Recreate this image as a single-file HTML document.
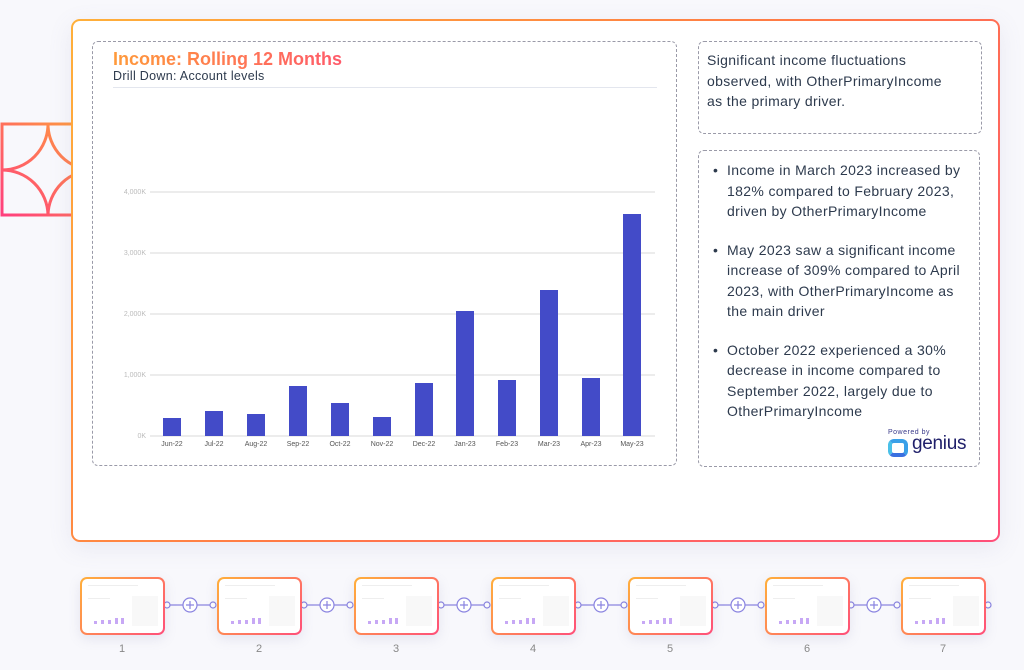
<!DOCTYPE html>
<html><head><meta charset="utf-8"><style>
*{margin:0;padding:0;box-sizing:border-box}
body{width:1024px;height:670px;background:#f8f8fc;position:relative;overflow:hidden;font-family:"Liberation Sans",sans-serif;color:#2b3648}
.card{position:absolute;left:71px;top:19px;width:929px;height:523px;border-radius:9px;padding:2px;background:linear-gradient(135deg,#ffb03a,#ff7a45 50%,#ff4f7a);box-shadow:0 6px 24px rgba(120,120,170,.12)}
.card>div{width:100%;height:100%;background:#fff;border-radius:7px;position:relative}
.dash{position:absolute;border:1.3px dashed #9a9aa8;border-radius:6px}
.t{position:absolute;white-space:nowrap}
.rt{font-size:14px;letter-spacing:.35px;line-height:20.5px;color:#2d3a4d}
ul{list-style:none}
li{position:relative;padding-left:18px;margin-bottom:18px}
li:before{content:"•";position:absolute;left:4px}
.thumb{position:absolute;top:577px;width:85px;height:58px;border-radius:7px;padding:2px;background:linear-gradient(135deg,#ffb03a,#ff4f7a);box-shadow:0 4px 12px rgba(120,120,170,.15)}
.thumb>div{background:#fff;width:100%;height:100%;border-radius:5px;position:relative;overflow:hidden}
.thumb i{position:absolute;display:block;background:#eee}
.thumb b{position:absolute;display:block;background:#c7a8f5;width:3px;bottom:9px}
.num{position:absolute;top:643px;font-size:11px;color:#888;width:20px;text-align:center}
</style></head><body>
<svg style="position:absolute;left:0;top:0" width="100" height="230">
<defs><linearGradient id="g" x1="1" y1="0" x2="0" y2="1"><stop offset="0" stop-color="#ffa23a"/><stop offset="1" stop-color="#ff3f7e"/></linearGradient></defs>
<g fill="none" stroke="url(#g)" stroke-width="3">
<rect x="2" y="124" width="92" height="91"/>
<path d="M48 124 A46 46 0 0 1 2 170 M48 124 A46 46 0 0 0 94 170 M2 170 A46 46 0 0 1 48 215 M94 170 A46 46 0 0 0 48 215"/>
</g></svg>
<div class="card"><div>
<div class="dash" style="left:19px;top:20px;width:585px;height:425px"></div>
<div class="t" style="left:40px;top:28px;font-size:18px;font-weight:bold;background:linear-gradient(90deg,#ff9a3a,#ff5a6a);-webkit-background-clip:text;color:transparent">Income: Rolling 12 Months</div>
<div class="t" style="left:40px;top:48px;font-size:12.5px;letter-spacing:.3px;color:#2d3a4d">Drill Down: Account levels</div>
<div style="position:absolute;left:40px;top:66px;width:544px;height:1px;background:#e3e6ee"></div>
<div class="dash" style="left:625px;top:20px;width:284px;height:93px"></div>
<div class="t rt" style="left:634px;top:29px">Significant income fluctuations<br>observed, with OtherPrimaryIncome<br>as the primary driver.</div>
<div class="dash" style="left:625px;top:129px;width:282px;height:317px"></div>
<ul class="rt" style="position:absolute;left:636px;top:139px;width:260px;white-space:nowrap">
<li>Income in March 2023 increased by<br>182% compared to February 2023,<br>driven by OtherPrimaryIncome</li>
<li>May 2023 saw a significant income<br>increase of 309% compared to April<br>2023, with OtherPrimaryIncome as<br>the main driver</li>
<li>October 2022 experienced a 30%<br>decrease in income compared to<br>September 2022, largely due to<br>OtherPrimaryIncome</li>
</ul>
<div class="t" style="left:815px;top:408px;font-size:7px;color:#3a3a8a;letter-spacing:.5px">Powered by</div>
<div style="position:absolute;left:815px;top:418px;width:20px;height:18px;border-radius:6px;border:4px solid #3aa0e8;border-left-color:#4ac0e8;border-bottom-color:#3a70e0"></div>
<div class="t" style="left:839px;top:412px;font-size:19px;color:#1f1f6a;letter-spacing:-.3px">genius</div>
</div></div>
<svg style="position:absolute;left:0;top:0" width="700" height="470" font-family="Liberation Sans" font-size="7" fill="#555">
<g stroke="#d8d8d8" stroke-width="1">
<line x1="150" y1="192" x2="655" y2="192"/><line x1="150" y1="253" x2="655" y2="253"/><line x1="150" y1="314" x2="655" y2="314"/><line x1="150" y1="375" x2="655" y2="375"/><line x1="150" y1="436" x2="655" y2="436"/>
</g>
<g fill="#bbb" text-anchor="end"><text x="146" y="194">4,000K</text><text x="146" y="255">3,000K</text><text x="146" y="316">2,000K</text><text x="146" y="377">1,000K</text><text x="146" y="438">0K</text></g>
<g fill="#434bc8">
<rect x="163" y="418" width="18" height="18"/><rect x="205" y="411" width="18" height="25"/><rect x="247" y="414" width="18" height="22"/><rect x="289" y="386" width="18" height="50"/><rect x="331" y="403" width="18" height="33"/><rect x="373" y="417" width="18" height="19"/><rect x="415" y="383" width="18" height="53"/><rect x="456" y="311" width="18" height="125"/><rect x="498" y="380" width="18" height="56"/><rect x="540" y="290" width="18" height="146"/><rect x="582" y="378" width="18" height="58"/><rect x="623" y="214" width="18" height="222"/>
</g>
<g text-anchor="middle">
<text x="172" y="446">Jun-22</text><text x="214" y="446">Jul-22</text><text x="256" y="446">Aug-22</text><text x="298" y="446">Sep-22</text><text x="340" y="446">Oct-22</text><text x="382" y="446">Nov-22</text><text x="424" y="446">Dec-22</text><text x="465" y="446">Jan-23</text><text x="507" y="446">Feb-23</text><text x="549" y="446">Mar-23</text><text x="591" y="446">Apr-23</text><text x="632" y="446">May-23</text>
</g></svg>
<svg style="position:absolute;left:0;top:590px" width="1024" height="30" fill="#fff" stroke="#8a84e0" stroke-width="1.2">
<g id="c"><line x1="167" y1="15" x2="213" y2="15"/><circle cx="167" cy="15" r="3"/><circle cx="213" cy="15" r="3"/><circle cx="190" cy="15" r="7"/><path d="M186 15h8M190 11v8" fill="none"/></g>
<use href="#c" x="137"/><use href="#c" x="274"/><use href="#c" x="411"/><use href="#c" x="548"/><use href="#c" x="684"/>
<circle cx="988" cy="15" r="3"/>
</svg>
<div class="thumb" style="left:80px"><div><i style="left:6px;top:6px;width:50px;height:1px"></i><i style="left:6px;top:19px;width:22px;height:1px"></i><i style="left:50px;top:17px;width:26px;height:30px;background:#f8f8f8"></i><b style="left:12px;height:3px"></b><b style="left:19px;height:4px"></b><b style="left:26px;height:4px"></b><b style="left:33px;height:6px"></b><b style="left:39px;height:6px"></b></div></div>
<div class="thumb" style="left:217px"><div><i style="left:6px;top:6px;width:50px;height:1px"></i><i style="left:6px;top:19px;width:22px;height:1px"></i><i style="left:50px;top:17px;width:26px;height:30px;background:#f8f8f8"></i><b style="left:12px;height:3px"></b><b style="left:19px;height:4px"></b><b style="left:26px;height:4px"></b><b style="left:33px;height:6px"></b><b style="left:39px;height:6px"></b></div></div>
<div class="thumb" style="left:354px"><div><i style="left:6px;top:6px;width:50px;height:1px"></i><i style="left:6px;top:19px;width:22px;height:1px"></i><i style="left:50px;top:17px;width:26px;height:30px;background:#f8f8f8"></i><b style="left:12px;height:3px"></b><b style="left:19px;height:4px"></b><b style="left:26px;height:4px"></b><b style="left:33px;height:6px"></b><b style="left:39px;height:6px"></b></div></div>
<div class="thumb" style="left:491px"><div><i style="left:6px;top:6px;width:50px;height:1px"></i><i style="left:6px;top:19px;width:22px;height:1px"></i><i style="left:50px;top:17px;width:26px;height:30px;background:#f8f8f8"></i><b style="left:12px;height:3px"></b><b style="left:19px;height:4px"></b><b style="left:26px;height:4px"></b><b style="left:33px;height:6px"></b><b style="left:39px;height:6px"></b></div></div>
<div class="thumb" style="left:628px"><div><i style="left:6px;top:6px;width:50px;height:1px"></i><i style="left:6px;top:19px;width:22px;height:1px"></i><i style="left:50px;top:17px;width:26px;height:30px;background:#f8f8f8"></i><b style="left:12px;height:3px"></b><b style="left:19px;height:4px"></b><b style="left:26px;height:4px"></b><b style="left:33px;height:6px"></b><b style="left:39px;height:6px"></b></div></div>
<div class="thumb" style="left:765px"><div><i style="left:6px;top:6px;width:50px;height:1px"></i><i style="left:6px;top:19px;width:22px;height:1px"></i><i style="left:50px;top:17px;width:26px;height:30px;background:#f8f8f8"></i><b style="left:12px;height:3px"></b><b style="left:19px;height:4px"></b><b style="left:26px;height:4px"></b><b style="left:33px;height:6px"></b><b style="left:39px;height:6px"></b></div></div>
<div class="thumb" style="left:901px"><div><i style="left:6px;top:6px;width:50px;height:1px"></i><i style="left:6px;top:19px;width:22px;height:1px"></i><i style="left:50px;top:17px;width:26px;height:30px;background:#f8f8f8"></i><b style="left:12px;height:3px"></b><b style="left:19px;height:4px"></b><b style="left:26px;height:4px"></b><b style="left:33px;height:6px"></b><b style="left:39px;height:6px"></b></div></div>
<div class="num" style="left:112px">1</div><div class="num" style="left:249px">2</div><div class="num" style="left:386px">3</div><div class="num" style="left:523px">4</div><div class="num" style="left:660px">5</div><div class="num" style="left:797px">6</div><div class="num" style="left:933px">7</div>
</body></html>
